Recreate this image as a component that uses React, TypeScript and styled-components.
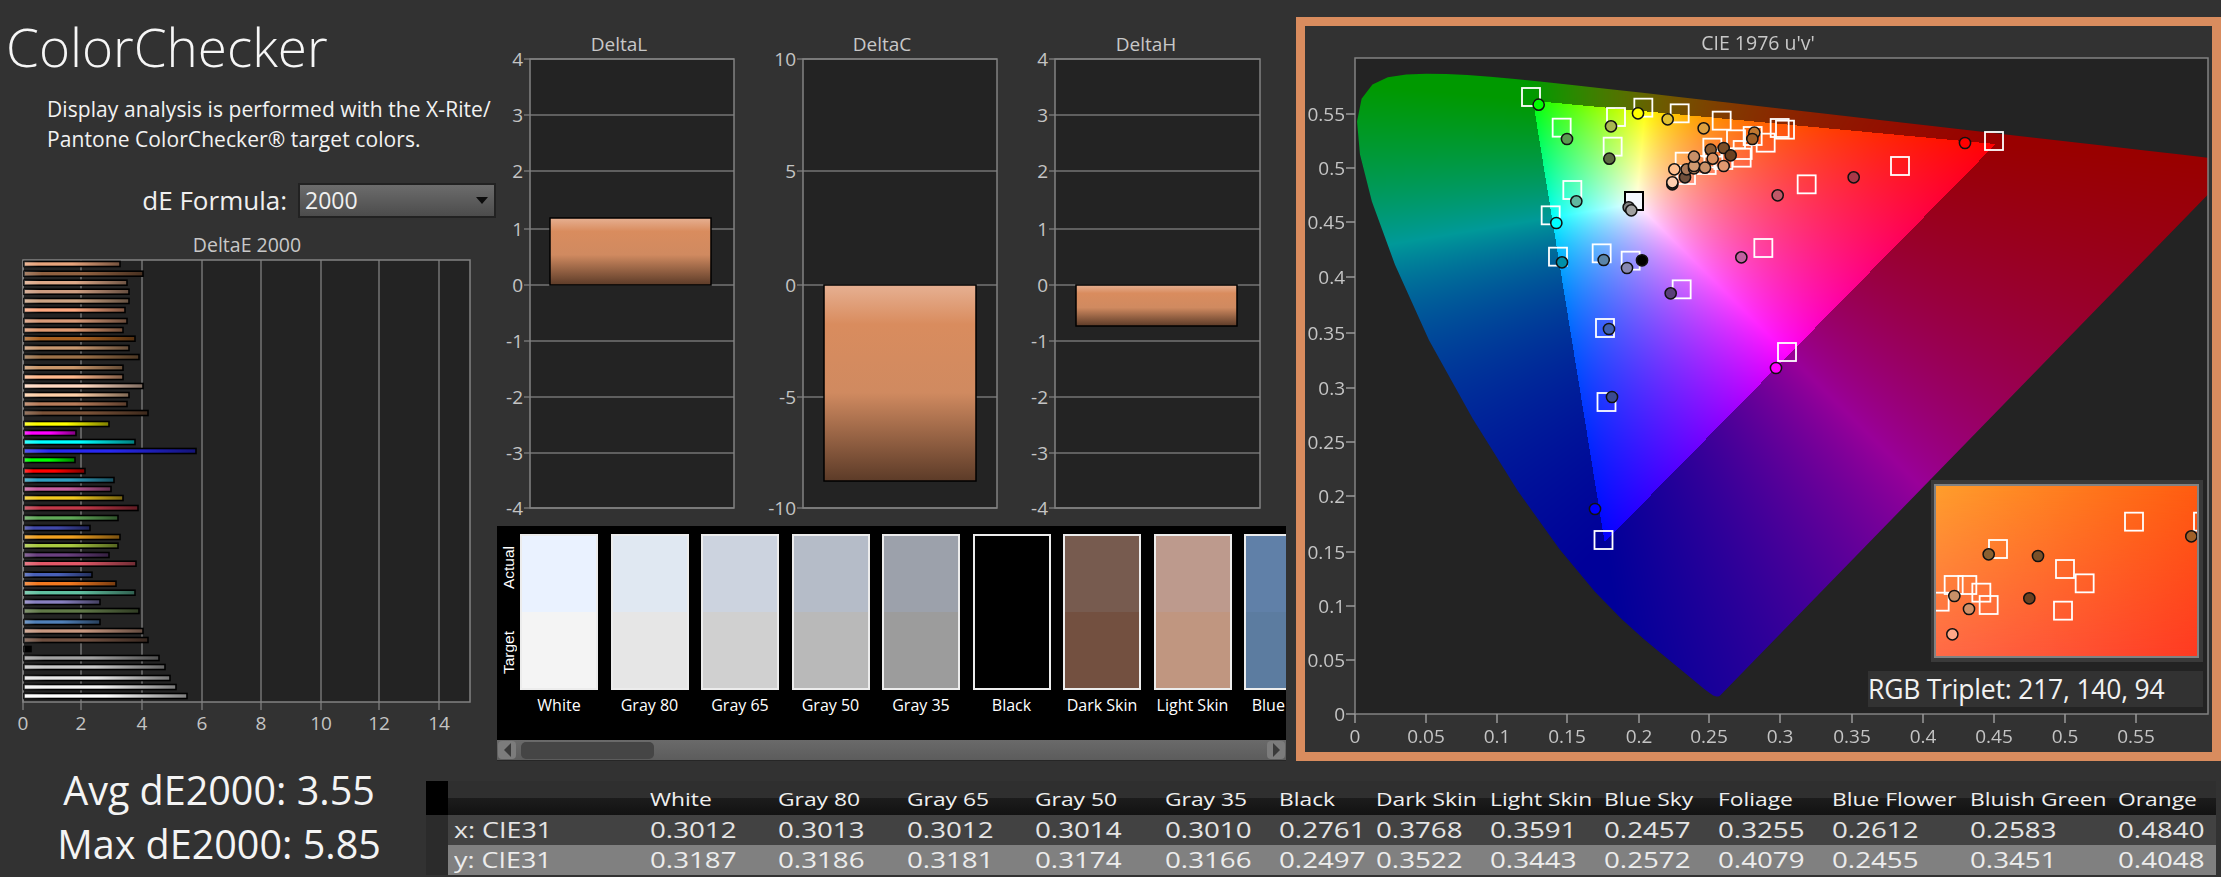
import { useEffect, useRef } from "react";
import styled, { createGlobalStyle } from "styled-components";

const UI_FONT = `"Open Sans", "Noto Sans", "Liberation Sans", sans-serif`;

const GlobalStyle = createGlobalStyle`
  html, body {
    margin: 0;
    padding: 0;
    background: #323232;
  }
  body {
    font-family: ${UI_FONT};
    color: #f0f0f0;
  }
`;

const Page = styled.div`
  width: 2221px;
  height: 877px;
  overflow: hidden;
  background: #323232;
  display: grid;
  grid-template-columns: 497px 799px 925px;
  grid-template-rows: 781px 96px;
`;

/* left column */
const LeftColumn = styled.div`
  display: flex;
  flex-direction: column;
`;

const Title = styled.h1`
  margin: 0;
  height: 94px;
  padding-left: 6px;
  box-sizing: border-box;
  font-size: 53px;
  font-weight: 350;
  line-height: 93px;
  color: #f6f6f6;
  white-space: nowrap;
`;

const Description = styled.p`
  margin: 0;
  padding-left: 47px;
  font-size: 21px;
  line-height: 30px;
  letter-spacing: 0.08px;
  white-space: nowrap;
  color: #f2f2f2;
`;

const FormulaRow = styled.div`
  margin-top: 28px;
  display: flex;
  justify-content: flex-end;
  align-items: center;
  gap: 11px;
  padding-right: 1px;
`;

const FormulaLabel = styled.span`
  font-size: 26px;
`;

const Dropdown = styled.div`
  width: 198px;
  height: 35px;
  box-sizing: border-box;
  border: 2px solid #222;
  background: linear-gradient(#6c6c6c, #4c4c4c);
  display: flex;
  align-items: center;
  justify-content: space-between;
  padding: 0 6px 0 5px;
  font-size: 23px;
`;

const DropdownArrow = styled.span`
  width: 0;
  height: 0;
  border-left: 6px solid transparent;
  border-right: 6px solid transparent;
  border-top: 7px solid #0c0c0c;
`;

const ChartSvg = styled.svg<{ $w: number; $h: number; $top?: number }>`
  display: block;
  flex: none;
  width: ${({ $w }) => $w}px;
  height: ${({ $h }) => $h}px;
  margin-top: ${({ $top }) => $top ?? 0}px;
  font-family: ${UI_FONT};
`;

/* middle column */
const MiddleColumn = styled.div`
  display: flex;
  flex-direction: column;
  padding-top: 30px;
`;

const DeltaRow = styled.div`
  display: flex;
  height: 496px;
`;

const SwatchPanel = styled.div`
  width: 789px;
  display: flex;
  flex-direction: column;
`;

const SwatchBody = styled.div`
  height: 214px;
  background: #000;
  display: flex;
`;

const SideLabels = styled.div`
  flex: none;
  width: 23px;
  display: flex;
  flex-direction: column;
  align-items: center;
  gap: 42px;
  padding-top: 20px;
`;

const SideLabel = styled.span`
  writing-mode: vertical-rl;
  transform: rotate(180deg);
  font-family: "Liberation Sans", Arial, sans-serif;
  font-size: 15.5px;
  line-height: 15px;
  color: #fff;
`;

const SwatchStrip = styled.div`
  flex: 1;
  min-width: 0;
  overflow: hidden;
  display: flex;
  gap: 12.5px;
  padding-top: 8px;
`;

const SwatchCol = styled.div`
  flex: none;
  width: 78px;
  display: flex;
  flex-direction: column;
  align-items: center;
`;

const SwatchBox = styled.div`
  width: 78px;
  height: 156px;
  box-sizing: border-box;
  border: 2px solid #ececec;
  display: flex;
  flex-direction: column;
`;

const SwatchHalf = styled.div<{ $color: string }>`
  flex: 1;
  background: ${({ $color }) => $color};
`;

const SwatchName = styled.span`
  margin-top: 4px;
  font-size: 16px;
  line-height: 22px;
  white-space: nowrap;
  color: #fff;
`;

const ScrollTrack = styled.div`
  height: 21px;
  background: linear-gradient(#6a6a6a, #5c5c5c);
  border-bottom: 1px solid #262626;
  box-sizing: border-box;
  display: flex;
  align-items: center;
  padding: 0 1px;
`;

const ScrollButton = styled.div<{ $right?: boolean }>`
  flex: none;
  width: 18px;
  height: 18px;
  background: #7c7c7c;
  border-radius: 4px;
  display: flex;
  align-items: center;
  justify-content: center;
  margin-left: ${({ $right }) => ($right ? "auto" : "0")};

  &::before {
    content: "";
    border-top: 7px solid transparent;
    border-bottom: 7px solid transparent;
    ${({ $right }) =>
      $right ? "border-left: 7px solid #3a3a3a;" : "border-right: 7px solid #3a3a3a;"}
  }
`;

const ScrollThumb = styled.div`
  flex: none;
  width: 133px;
  height: 17px;
  margin-left: 5px;
  border-radius: 5px;
  background: #454545;
`;

/* gamut frame */
const Frame = styled.div`
  margin-top: 17px;
  height: 744px;
  box-sizing: border-box;
  border: 9px solid #d98c5e;
  background: #323232;
  padding: 32px 0 0 50px;
`;

const Plot = styled.div`
  position: relative;
  width: 853px;
  height: 656px;
  background: #232323;
`;

const GamutCanvas = styled.canvas`
  position: absolute;
  left: 0;
  top: 0;
`;

const PlotOverlay = styled.svg`
  position: absolute;
  left: 0;
  top: 0;
  width: 853px;
  height: 656px;
  overflow: visible;
  font-family: ${UI_FONT};
`;

const Inset = styled.div`
  position: absolute;
  left: 576px;
  top: 422px;
  width: 272px;
  height: 182px;
  box-sizing: border-box;
  background: #3a3a3a;
  padding: 4px 4px 4px 3px;
`;

const InsetPlot = styled.div`
  position: relative;
  width: 265px;
  height: 174px;
  box-sizing: border-box;
  border: 2px solid #828282;
  overflow: hidden;
  background: linear-gradient(to right, #ff9e2c, #ff5c10);

  &::before {
    content: "";
    position: absolute;
    inset: 0;
    background: linear-gradient(to right, #ff6a48, #ff3a22);
    mask-image: linear-gradient(to bottom, transparent, #000);
  }
`;

const InsetMarks = styled.svg`
  position: absolute;
  left: 0;
  top: 0;
  width: 261px;
  height: 170px;
`;

const TripletLabel = styled.div`
  position: absolute;
  left: 513px;
  top: 613px;
  width: 335px;
  height: 36px;
  background: #323232;
  font-size: 26.5px;
  line-height: 36px;
  letter-spacing: -0.2px;
  white-space: nowrap;
  color: #f2f2f2;
`;

/* bottom row */
const BottomRow = styled.div`
  grid-column: 1 / -1;
  display: flex;
`;

const Stats = styled.div`
  flex: none;
  width: 426px;
  margin-top: -18px;
  display: flex;
  flex-direction: column;
`;

const StatLine = styled.div`
  width: 438px;
  text-align: center;
  font-size: 39.5px;
  line-height: 54px;
  white-space: nowrap;
  color: #f4f4f4;
`;

const DataTable = styled.div`
  width: 1790px;
  font-size: 21px;
`;

const TableRow = styled.div<{ $bg: string; $h: number }>`
  height: ${({ $h }) => $h}px;
  background: ${({ $bg }) => $bg};
  display: grid;
  grid-template-columns: 22px 202px 128px 129px 128px 130px 114px 97px 114px 114px 114px 114px 138px 148px 98px;
  align-items: center;
`;

const Stub = styled.div<{ $bg: string }>`
  align-self: stretch;
  background: ${({ $bg }) => $bg};
`;

const Cell = styled.div<{ $color: string; $pad?: number }>`
  padding-left: ${({ $pad }) => $pad ?? 0}px;
  color: ${({ $color }) => $color};
  white-space: nowrap;
  line-height: 30px;
`;

const CellText = styled.span<{ $stretch: number; $size?: number }>`
  display: inline-block;
  font-size: ${({ $size }) => $size ?? 21}px;
  transform: scaleX(${({ $stretch }) => $stretch});
  transform-origin: left center;
`;

type DeltaChartProps = {
  title: string;
  titleX: number;
  x0: number;
  width: number;
  plotL: number;
  plotR: number;
  ticks: [string, number][];
  bar: { x: number; w: number; y: number; h: number };
};

const Y_TOP = 30;

function DeltaChart({ title, titleX, x0, width, plotL, plotR, ticks, bar }: DeltaChartProps) {
  const gradId = `delta-${title}`;
  return (
    <ChartSvg $w={width} $h={496} viewBox={`${x0} ${Y_TOP} ${width} 496`}>
      <defs>
        <linearGradient id={gradId} x1="0" y1="0" x2="0" y2="1">
          <stop offset="0" stopColor="#e6b092" />
          <stop offset="0.2" stopColor="#d98c5e" />
          <stop offset="0.55" stopColor="#d08a60" />
          <stop offset="1" stopColor="#5c3b28" />
        </linearGradient>
      </defs>
      <text x={titleX} y={51} textAnchor="middle" fontSize={19} fill="#c8c8c8">
        {title}
      </text>
      <rect x={plotL} y={59} width={plotR - plotL} height={449} fill="#232323" />
      {ticks.map(([label, y]) => (
        <g key={label}>
          <line x1={plotL - 6} x2={plotR} y1={y} y2={y} stroke="#747474" strokeWidth={1.5} />
          <text x={plotL - 7} y={y + 7} textAnchor="end" fontSize={19} fill="#c4c4c4">
            {label}
          </text>
        </g>
      ))}
      <rect
        x={plotL}
        y={59}
        width={plotR - plotL}
        height={449}
        fill="none"
        stroke="#828282"
        strokeWidth={1.5}
      />
      <rect
        x={bar.x}
        y={bar.y}
        width={bar.w}
        height={bar.h}
        fill={`url(#${gradId})`}
        stroke="#000"
        strokeWidth={1.5}
      />
    </ChartSvg>
  );
}

const DE_ROWS: [number, number, string][] = [
  [263, 120, "#e8a47c"], [272.7, 143, "#8f6040"], [281.7, 127, "#dca888"], [290.7, 129, "#cc9c80"],
  [300, 129, "#cca484"], [309, 125, "#ffa980"], [320, 127, "#d89a78"], [329, 123, "#e09a72"],
  [337.7, 135, "#a86020"], [347, 129, "#c89870"], [356, 139, "#9a7048"], [366.7, 123, "#c8966a"],
  [376, 123, "#ffb88c"], [385, 143, "#ffd8c0"], [394, 129, "#ffd0a8"], [403, 127, "#b87c5a"],
  [412, 148, "#7a5238"], [423, 109, "#ffff00"], [432, 76, "#ff00ff"], [441, 135, "#00ffff"],
  [450, 196, "#2828f0"], [459, 75, "#00ff00"], [470, 85, "#ff0000"], [479, 114, "#30a0c0"],
  [488, 111, "#c860a0"], [497, 123, "#f0c820"], [507, 138, "#c03848"], [517, 118, "#60a858"],
  [527, 90, "#4048a8"], [536, 120, "#f0a020"], [544.7, 118, "#a8c840"], [554, 109, "#6a4080"],
  [562.7, 136, "#e05868"], [573.7, 92, "#4860b8"], [582.7, 116, "#f07820"], [591.7, 135, "#60c0a0"],
  [601, 100, "#8880c0"], [610, 139, "#607848"], [621, 100, "#5080b8"], [630, 143, "#c89880"],
  [639, 148, "#705040"], [648, 31, "#000000"], [657, 159, "#a0a0a0"], [666, 165, "#c8c8c8"],
  [677, 170, "#e8e8e8"], [686, 176, "#f4f4f4"], [695, 187, "#ffffff"],
];

const DE_GRID: [string, number][] = [
  ["0", 23], ["2", 81], ["4", 142], ["6", 202], ["8", 261], ["10", 321], ["12", 379], ["14", 439],
];

function DeltaEChart() {
  return (
    <ChartSvg $w={497} $h={500} $top={18} viewBox="0 235 497 500">
      <defs>
        <linearGradient id="deShade" x1="0" y1="0" x2="1" y2="0">
          <stop offset="0" stopColor="#fff" stopOpacity="0.22" />
          <stop offset="0.15" stopColor="#fff" stopOpacity="0" />
          <stop offset="0.5" stopColor="#000" stopOpacity="0" />
          <stop offset="1" stopColor="#000" stopOpacity="0.5" />
        </linearGradient>
      </defs>
      <text x={247} y={251} textAnchor="middle" fontSize={19.5} fill="#c8c8c8">
        DeltaE 2000
      </text>
      <rect x={23} y={259} width={447} height={442} fill="#232323" />
      {DE_GRID.map(([label, x]) => (
        <g key={label}>
          <line x1={x} x2={x} y1={259} y2={709} stroke="#747474" strokeWidth={1.5} />
          <text x={x} y={729} textAnchor="middle" fontSize={19} fill="#c4c4c4">
            {label}
          </text>
        </g>
      ))}
      <rect x={23} y={259} width={447} height={442} fill="none" stroke="#828282" strokeWidth={1.5} />
      {DE_ROWS.map(([y, end, color]) => (
        <g key={y}>
          <rect x={24} y={y - 2.5} width={end - 24} height={5} fill={color} stroke="#000" strokeWidth={1.6} />
          <rect x={24} y={y - 2.5} width={end - 24} height={5} fill="url(#deShade)" />
        </g>
      ))}
    </ChartSvg>
  );
}

const LOCUS_XY: [number, number][] = [
  [0.1741, 0.005], [0.1738, 0.0049], [0.1733, 0.0048], [0.1726, 0.0048], [0.1714, 0.0051],
  [0.1689, 0.0069], [0.1644, 0.0109], [0.1566, 0.0177], [0.151, 0.0227], [0.144, 0.0297],
  [0.1355, 0.0399], [0.1241, 0.0578], [0.1096, 0.0868], [0.0913, 0.1327], [0.0687, 0.2007],
  [0.0454, 0.295], [0.0235, 0.4127], [0.0082, 0.5384], [0.0039, 0.6548], [0.0139, 0.7502],
  [0.0389, 0.812], [0.0743, 0.8338], [0.1142, 0.8262], [0.1547, 0.8059], [0.1929, 0.7816],
  [0.2296, 0.7543], [0.2658, 0.7243], [0.3016, 0.6923], [0.3373, 0.6589], [0.3731, 0.6245],
  [0.4087, 0.5896], [0.4441, 0.5547], [0.4788, 0.5202], [0.5125, 0.4866], [0.5448, 0.4544],
  [0.5752, 0.4242], [0.6029, 0.3965], [0.627, 0.3725], [0.6658, 0.334], [0.6915, 0.3083],
  [0.7079, 0.292], [0.719, 0.2809], [0.726, 0.274], [0.7347, 0.2653],
];

const PLOT_W = 853;
const PLOT_H = 656;
const PX_PER_U = 1420;
const PX_PER_V = 1091;
const TONE_IN = 0.82;
const TONE_OUT = 1;

function drawGamut(ctx: CanvasRenderingContext2D) {
  const image = ctx.createImageData(PLOT_W, PLOT_H);
  for (let py = 0; py < PLOT_H; py++) {
    const v = (PLOT_H - py) / PX_PER_V;
    for (let px = 0; px < PLOT_W; px++) {
      const u = px / PX_PER_U;
      const d = 6 * u - 16 * v + 12;
      const x = (9 * u) / d;
      const y = (4 * v) / d;
      const X = x / y;
      const Z = (1 - x - y) / y;
      let r = 3.2406 * X - 1.5372 - 0.4986 * Z;
      let g = -0.9689 * X + 1.8758 + 0.0415 * Z;
      let b = 0.0557 * X - 0.204 + 1.057 * Z;
      const inside = r >= 0 && g >= 0 && b >= 0;
      r = Math.max(r, 0);
      g = Math.max(g, 0);
      b = Math.max(b, 0);
      const m = Math.max(r, g, b) || 1;
      let k = inside ? 255 : 153;
      // the strip above the red-green edge goes darker around yellow
      if (!inside && b === 0) k *= 1 - 0.35 * (Math.min(r, g) / m);
      const tone = inside ? TONE_IN : TONE_OUT;
      const i = (py * PLOT_W + px) * 4;
      image.data[i] = k * Math.pow(r / m, tone);
      image.data[i + 1] = k * Math.pow(g / m, tone);
      image.data[i + 2] = k * Math.pow(b / m, tone);
      image.data[i + 3] = 255;
    }
  }
  const off = document.createElement("canvas");
  off.width = PLOT_W;
  off.height = PLOT_H;
  off.getContext("2d")!.putImageData(image, 0, 0);

  ctx.beginPath();
  LOCUS_XY.forEach(([x, y], i) => {
    const d = -2 * x + 12 * y + 3;
    const px = ((4 * x) / d) * PX_PER_U;
    const py = PLOT_H - ((9 * y) / d) * PX_PER_V;
    if (i === 0) ctx.moveTo(px, py);
    else ctx.lineTo(px, py);
  });
  ctx.closePath();
  ctx.clip();
  ctx.drawImage(off, 0, 0);
}

const X_TICKS: [string, number][] = [
  ["0", 1355], ["0.05", 1426], ["0.1", 1497], ["0.15", 1567], ["0.2", 1639], ["0.25", 1709],
  ["0.3", 1780], ["0.35", 1852], ["0.4", 1923], ["0.45", 1994], ["0.5", 2065], ["0.55", 2136],
];

const Y_TICKS: [string, number][] = [
  ["0", 714], ["0.05", 660], ["0.1", 606], ["0.15", 552], ["0.2", 496], ["0.25", 442],
  ["0.3", 388], ["0.35", 333], ["0.4", 277], ["0.45", 222], ["0.5", 168], ["0.55", 114],
];

// positions are zoomed crop coordinates, see toX/toY
const toX = (z: number) => 1500 + z / 3;
const toY = (z: number) => 60 + z / 3;

const SQUARES: [number, number][] = [
  [toX(93), toY(111)], [toX(185), toY(203)], [toX(348), toY(171)], [toX(430), toY(143)],
  [toX(539), toY(160)], [toX(338), toY(260)], [toX(217), toY(390)], [toX(152), toY(466)],
  [toX(174), toY(590)], [toX(305), toY(580)], [toX(392), toY(602)], [toX(545), toY(688)],
  [toX(790), toY(564)], [toX(920), toY(373)], [toX(665), toY(182)], [toX(839), toY(204)],
  [toX(855), toY(209)], [toX(797), toY(248)], [toX(758), toY(228)], [toX(708), toY(238)],
  [toX(637), toY(263)], [toX(554), toY(305)], [toX(558), toY(345)], [toX(725), toY(293)],
  [toX(728), toY(270)], [toX(640), toY(295)], [toX(620), toY(315)], [toX(670), toY(300)],
  [1994, 141], [1900, 166], [1787, 352], [1603.5, 540], [1606.5, 402], [1605, 328],
];

const DOTS: [number, number, string][] = [
  [toX(116), toY(134), "#00ff00"], [toX(201), toY(237), "#5a9a50"], [toX(333), toY(199), "#a8b850"],
  [toX(414), toY(160), "#ffff00"], [toX(503), toY(178), "#e0c030"], [toX(611), toY(205), "#dca040"],
  [toX(763), toY(218), "#c07830"], [toX(757), toY(237), "#a06028"], [toX(328), toY(296), "#5a6a40"],
  [toX(229), toY(424), "#60b8a0"], [toX(169), toY(489), "#00ffff"], [toX(186), toY(607), "#0090a8"],
  [toX(311), toY(600), "#5a84a8"], [toX(381), toY(624), "#8888b0"], [toX(426), toY(601), "#000000"],
  [toX(512), toY(700), "#5a4078"], [toX(724), toY(592), "#c060a0"], [toX(833), toY(406), "#c05868"],
  [toX(1061), toY(352), "#a83848"], [toX(386), toY(442), "#808080"], [toX(394), toY(451), "#a0a0a0"],
  [toX(517), toY(373), "#3a2a20"], [toX(517), toY(367), "#ffcfb0"], [toX(523), toY(328), "#ffc090"],
  [toX(555), toY(352), "#70503c"], [toX(560), toY(328), "#a87858"], [toX(582), toY(325), "#c08860"],
  [toX(582), toY(318), "#d09a70"], [toX(582), toY(290), "#c89068"], [toX(615), toY(323), "#c89068"],
  [toX(632), toY(269), "#8a5a30"], [toX(638), toY(296), "#d89060"], [toX(671), toY(264), "#7a4e28"],
  [toX(692), toY(286), "#6a4020"], [toX(671), toY(318), "#e09870"],
  [1965, 143, "#ff0000"], [1776, 368, "#ff00ff"], [1609, 329, "#4060b0"], [1612, 397, "#3a4a90"],
  [1595, 509, "#0000ff"],
];

const insetX = (z: number) => z / 3 - 37;
const insetY = (z: number) => z / 3 - 27;

const INSET_SQUARES: [number, number][] = [
  [297, 270], [705, 188], [498, 330], [557, 373], [164, 378], [205, 378],
  [247, 401], [269, 438], [492, 455], [122, 428], [912, 188],
];

const INSET_DOTS: [number, number, string][] = [
  [269, 286, "#8a6030"], [417, 291, "#7a5028"], [391, 418, "#6a4020"], [166, 411, "#c89068"],
  [210, 450, "#d09068"], [160, 526, "#ffa888"], [877, 232, "#a06028"],
];

function GamutPlot() {
  const canvasRef = useRef<HTMLCanvasElement>(null);

  useEffect(() => {
    const ctx = canvasRef.current?.getContext("2d");
    if (ctx) drawGamut(ctx);
  }, []);

  return (
    <Plot>
      <GamutCanvas ref={canvasRef} width={PLOT_W} height={PLOT_H} />
      <PlotOverlay viewBox="1355 58 853 656">
        <text x={1758} y={50} textAnchor="middle" fontSize={19.5} fill="#c8c8c8">
          CIE 1976 u'v'
        </text>
        <rect x={1355} y={58} width={853} height={656} fill="none" stroke="#828282" strokeWidth={1.5} />
        {X_TICKS.map(([label, x]) => (
          <g key={label}>
            <line x1={x} x2={x} y1={714} y2={723} stroke="#9a9a9a" strokeWidth={1.5} />
            <text x={x} y={743} textAnchor="middle" fontSize={19} fill="#c4c4c4">
              {label}
            </text>
          </g>
        ))}
        {Y_TICKS.map(([label, y]) => (
          <g key={label}>
            <line x1={1346} x2={1355} y1={y} y2={y} stroke="#9a9a9a" strokeWidth={1.5} />
            <text x={1345} y={y + 7} textAnchor="end" fontSize={19} fill="#c4c4c4">
              {label}
            </text>
          </g>
        ))}
        {SQUARES.map(([x, y]) => (
          <rect key={`${x}-${y}`} x={x - 9} y={y - 9} width={18} height={18} fill="none" stroke="#fff" strokeWidth={1.8} />
        ))}
        <rect x={1625} y={192} width={18} height={18} fill="#f4f8ff" stroke="#000" strokeWidth={2} />
        {DOTS.map(([x, y, color]) => (
          <circle key={`${x}-${y}`} cx={x} cy={y} r={5.6} fill={color} stroke="#111" strokeWidth={1.5} />
        ))}
      </PlotOverlay>
      <Inset>
        <InsetPlot>
          <InsetMarks viewBox="0 0 261 170">
            {INSET_SQUARES.map(([x, y]) => (
              <rect key={`${x}-${y}`} x={insetX(x) - 9} y={insetY(y) - 9} width={18} height={18} fill="none" stroke="#fff" strokeWidth={1.8} />
            ))}
            {INSET_DOTS.map(([x, y, color]) => (
              <circle key={`${x}-${y}`} cx={insetX(x)} cy={insetY(y)} r={5.6} fill={color} stroke="#111" strokeWidth={1.5} />
            ))}
          </InsetMarks>
        </InsetPlot>
      </Inset>
      <TripletLabel>RGB Triplet: 217, 140, 94</TripletLabel>
    </Plot>
  );
}

const SWATCHES: [string, string, string][] = [
  ["White", "#eaf2ff", "#f4f4f4"],
  ["Gray 80", "#e0e8f2", "#e6e6e6"],
  ["Gray 65", "#ccd3df", "#d0d0d0"],
  ["Gray 50", "#b5bcc8", "#b9b9b9"],
  ["Gray 35", "#9ca1ab", "#9c9c9c"],
  ["Black", "#000000", "#000000"],
  ["Dark Skin", "#775b4f", "#735040"],
  ["Light Skin", "#bd9a8d", "#c09680"],
  ["Blue Sky", "#6080a8", "#5c7ca0"],
];

const TABLE_HEAD = [
  "White", "Gray 80", "Gray 65", "Gray 50", "Gray 35", "Black", "Dark Skin",
  "Light Skin", "Blue Sky", "Foliage", "Blue Flower", "Bluish Green", "Orange",
];

const TABLE_X = [
  "0.3012", "0.3013", "0.3012", "0.3014", "0.3010", "0.2761", "0.3768",
  "0.3591", "0.2457", "0.3255", "0.2612", "0.2583", "0.4840",
];

const TABLE_Y = [
  "0.3187", "0.3186", "0.3181", "0.3174", "0.3166", "0.2497", "0.3522",
  "0.3443", "0.2572", "0.4079", "0.2455", "0.3451", "0.4048",
];

const DELTA_TICKS = (labels: string[]): [string, number][] =>
  labels.map((label, i) => [label, [59, 115, 171, 229, 285, 341, 397, 453, 508][i]]);

export default function App() {
  return (
    <Page>
      <GlobalStyle />
      <LeftColumn>
        <Title>ColorChecker</Title>
        <Description>
          Display analysis is performed with the X-Rite/
          <br />
          Pantone ColorChecker® target colors.
        </Description>
        <FormulaRow>
          <FormulaLabel>dE Formula:</FormulaLabel>
          <Dropdown>
            2000
            <DropdownArrow />
          </Dropdown>
        </FormulaRow>
        <DeltaEChart />
      </LeftColumn>

      <MiddleColumn>
        <DeltaRow>
          <DeltaChart
            title="DeltaL"
            titleX={619}
            x0={497}
            width={263}
            plotL={530}
            plotR={734}
            ticks={DELTA_TICKS(["4", "3", "2", "1", "0", "-1", "-2", "-3", "-4"])}
            bar={{ x: 550, w: 161, y: 218, h: 67 }}
          />
          <DeltaChart
            title="DeltaC"
            titleX={882}
            x0={760}
            width={260}
            plotL={803}
            plotR={997}
            ticks={[["10", 59], ["5", 171], ["0", 285], ["-5", 397], ["-10", 508]]}
            bar={{ x: 824, w: 152, y: 285, h: 196 }}
          />
          <DeltaChart
            title="DeltaH"
            titleX={1146}
            x0={1020}
            width={276}
            plotL={1055}
            plotR={1260}
            ticks={DELTA_TICKS(["4", "3", "2", "1", "0", "-1", "-2", "-3", "-4"])}
            bar={{ x: 1076, w: 161, y: 285, h: 41 }}
          />
        </DeltaRow>
        <SwatchPanel>
          <SwatchBody>
            <SideLabels>
              <SideLabel>Actual</SideLabel>
              <SideLabel>Target</SideLabel>
            </SideLabels>
            <SwatchStrip>
              {SWATCHES.map(([name, actual, target]) => (
                <SwatchCol key={name}>
                  <SwatchBox>
                    <SwatchHalf $color={actual} />
                    <SwatchHalf $color={target} />
                  </SwatchBox>
                  <SwatchName>{name}</SwatchName>
                </SwatchCol>
              ))}
            </SwatchStrip>
          </SwatchBody>
          <ScrollTrack>
            <ScrollButton />
            <ScrollThumb />
            <ScrollButton $right />
          </ScrollTrack>
        </SwatchPanel>
      </MiddleColumn>

      <Frame>
        <GamutPlot />
      </Frame>

      <BottomRow>
        <Stats>
          <StatLine>Avg dE2000: 3.55</StatLine>
          <StatLine>Max dE2000: 5.85</StatLine>
        </Stats>
        <DataTable>
          <TableRow $bg="linear-gradient(#2f2f2f 0 50%, #1c1c1c 50%, #121212)" $h={34}>
            <Stub $bg="#000" />
            <div />
            {TABLE_HEAD.map((name) => (
              <Cell key={name} $color="#f0f0f0">
                <CellText $stretch={1.2} $size={19}>
                  {name}
                </CellText>
              </Cell>
            ))}
          </TableRow>
          <TableRow $bg="#424242" $h={30}>
            <Stub $bg="#2b2b2b" />
            <Cell $color="#e4e4e4" $pad={6}>
              <CellText $stretch={1.28}>x: CIE31</CellText>
            </Cell>
            {TABLE_X.map((value, i) => (
              <Cell key={i} $color="#e4e4e4">
                <CellText $stretch={1.32}>{value}</CellText>
              </Cell>
            ))}
          </TableRow>
          <TableRow $bg="#808080" $h={30}>
            <Stub $bg="#2b2b2b" />
            <Cell $color="#ececec" $pad={6}>
              <CellText $stretch={1.28}>y: CIE31</CellText>
            </Cell>
            {TABLE_Y.map((value, i) => (
              <Cell key={i} $color="#ececec">
                <CellText $stretch={1.32}>{value}</CellText>
              </Cell>
            ))}
          </TableRow>
        </DataTable>
      </BottomRow>
    </Page>
  );
}
